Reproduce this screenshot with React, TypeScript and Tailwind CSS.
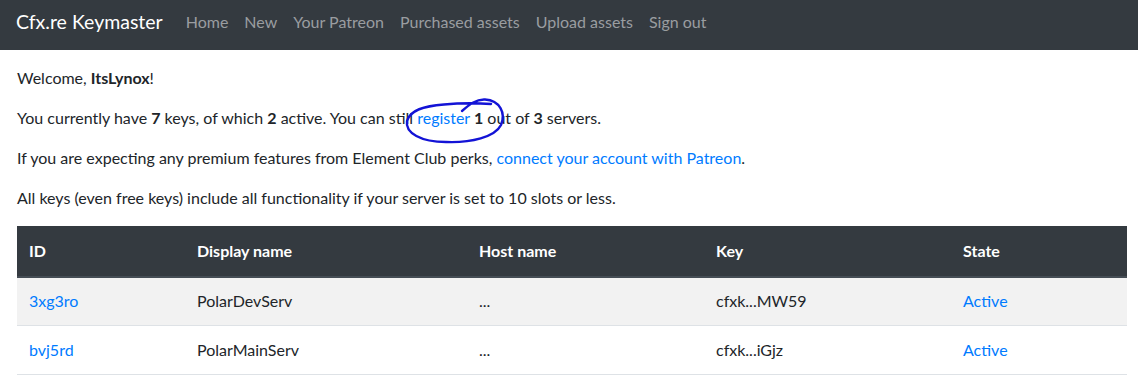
import React from "react";

const navLinks = ["Home", "New", "Your Patreon", "Purchased assets", "Upload assets", "Sign out"];

const rows = [
  { id: "3xg3ro", name: "PolarDevServ", host: "...", key: "cfxk...MW59", state: "Active" },
  { id: "bvj5rd", name: "PolarMainServ", host: "...", key: "cfxk...iGjz", state: "Active" },
];

export default function App() {
  return (
    <div className="min-h-screen bg-white text-[16px] leading-6 text-[#212529] [font-family:Lato,'Liberation_Sans',sans-serif]">
      <nav className="flex h-[50px] items-center bg-[#343a40] px-4 pb-[6px]">
        <a className="mr-[15px] text-[19.5px] leading-[30px] text-white">Cfx.re Keymaster</a>
        <ul className="flex items-center">
          {navLinks.map((l) => (
            <li key={l}>
              <a className="block px-2 text-[16px] leading-6 text-[#9a9da0]">{l}</a>
            </li>
          ))}
        </ul>
      </nav>

      <main className="pl-[17px] pr-[11px] pt-4">
        <p className="mb-4">
          Welcome, <b>ItsLynox</b>!
        </p>
        <p className="relative mb-4">
          You currently have <b>7</b> keys, of which <b>2</b> active. You can still{" "}
          <a className="text-[#007bff]">register</a> <b>1</b> out of <b>3</b> servers.
          <svg
            className="pointer-events-none absolute left-[-17px] top-[-40px]"
            width="620"
            height="120"
            viewBox="0 66 620 120"
            fill="none"
          >
            <path
              d="M462,111 C469,105 476,99 485,99.5 C500,100.5 506,113 501,125 C495,137 471,143 446,142 C421,142 405,133 407,121 C410,110 424,106 444,104.5 C460,103 476,103 491,104"
              stroke="#1313d6"
              strokeWidth="2.4"
              strokeLinecap="round"
              strokeLinejoin="round"
            />
          </svg>
        </p>
        <p className="mb-4">
          If you are expecting any premium features from Element Club perks,{" "}
          <a className="text-[#007bff]">connect your account with Patreon</a>.
        </p>
        <p className="mb-4">
          All keys (even free keys) include all functionality if your server is set to 10 slots or less.
        </p>

        <table className="w-[1110px] table-fixed border-collapse text-left">
          <thead>
            <tr className="h-[51px] border-b-2 border-[#454d55] bg-[#343a40] text-white">
              <th className="w-[168px] px-3 font-bold">ID</th>
              <th className="w-[282px] px-3 font-bold">Display name</th>
              <th className="w-[237px] px-3 font-bold">Host name</th>
              <th className="w-[247px] px-3 font-bold">Key</th>
              <th className="w-[176px] px-3 font-bold">State</th>
            </tr>
          </thead>
          <tbody>
            {rows.map((r, i) => (
              <tr
                key={r.id}
                className={
                  i === 0
                    ? "h-[48px] border-b border-[#dee2e6] bg-[#f2f2f2]"
                    : "h-[49px] border-b border-[#dee2e6] bg-white"
                }
              >
                <td className="px-3">
                  <a className="text-[#007bff]">{r.id}</a>
                </td>
                <td className="px-3">{r.name}</td>
                <td className="px-3">{r.host}</td>
                <td className="px-3">{r.key}</td>
                <td className="px-3">
                  <a className="text-[#007bff]">{r.state}</a>
                </td>
              </tr>
            ))}
          </tbody>
        </table>
      </main>
    </div>
  );
}
